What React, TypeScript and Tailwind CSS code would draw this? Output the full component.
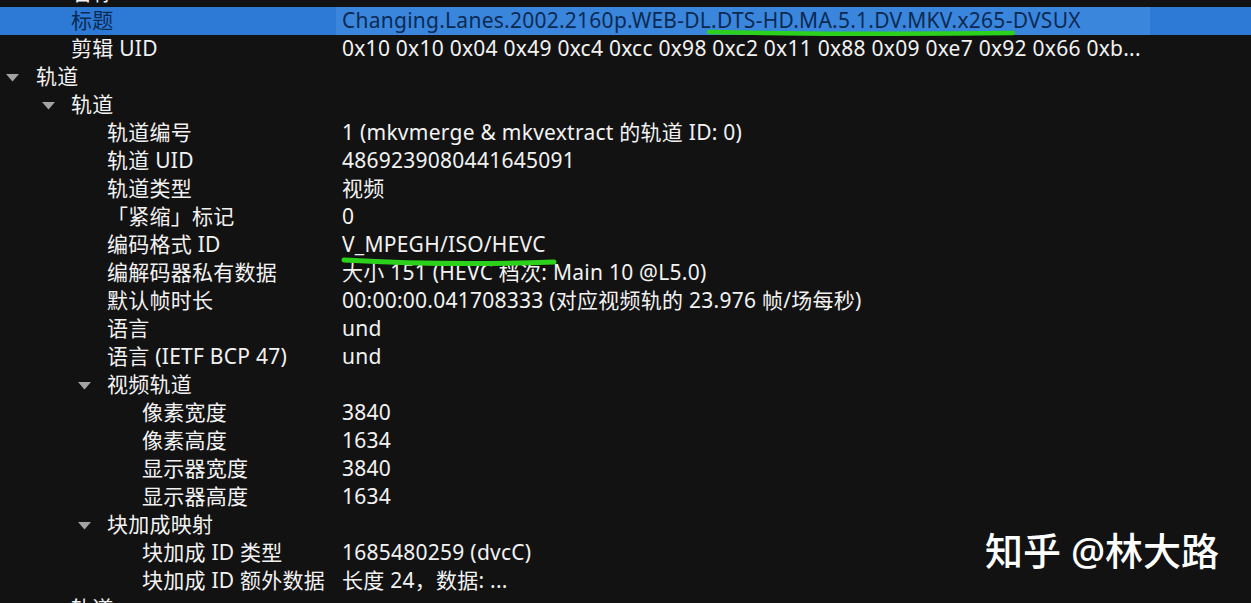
import React from 'react';

type Row = {
  label: string;
  value?: string;
  level: number;
  open?: boolean;
  selected?: boolean;
};

const rows: Row[] = [
  { label: '名称', level: 1 },
  { label: '标题', value: 'Changing.Lanes.2002.2160p.WEB-DL.DTS-HD.MA.5.1.DV.MKV.x265-DVSUX', level: 1, selected: true },
  { label: '剪辑 UID', value: '0x10 0x10 0x04 0x49 0xc4 0xcc 0x98 0xc2 0x11 0x88 0x09 0xe7 0x92 0x66 0xb...', level: 1 },
  { label: '轨道', level: 0, open: true },
  { label: '轨道', level: 1, open: true },
  { label: '轨道编号', value: '1 (mkvmerge & mkvextract 的轨道 ID: 0)', level: 2 },
  { label: '轨道 UID', value: '4869239080441645091', level: 2 },
  { label: '轨道类型', value: '视频', level: 2 },
  { label: '「紧缩」标记', value: '0', level: 2 },
  { label: '编码格式 ID', value: 'V_MPEGH/ISO/HEVC', level: 2 },
  { label: '编解码器私有数据', value: '大小 151 (HEVC 档次: Main 10 @L5.0)', level: 2 },
  { label: '默认帧时长', value: '00:00:00.041708333 (对应视频轨的 23.976 帧/场每秒)', level: 2 },
  { label: '语言', value: 'und', level: 2 },
  { label: '语言 (IETF BCP 47)', value: 'und', level: 2 },
  { label: '视频轨道', level: 2, open: true },
  { label: '像素宽度', value: '3840', level: 3 },
  { label: '像素高度', value: '1634', level: 3 },
  { label: '显示器宽度', value: '3840', level: 3 },
  { label: '显示器高度', value: '1634', level: 3 },
  { label: '块加成映射', level: 2, open: true },
  { label: '块加成 ID 类型', value: '1685480259 (dvcC)', level: 3 },
  { label: '块加成 ID 额外数据', value: '长度 24，数据: ...', level: 3 },
  { label: '轨道', level: 1, open: true },
];

const indent = ['pl-[36px]', 'pl-[71px]', 'pl-[107px]', 'pl-[142px]'];
const arrowPos = ['left-[6px]', 'left-[42px]', 'left-[78px]', 'left-[113px]'];

const Arrow: React.FC<{ className: string }> = ({ className }) => (
  <svg className={`absolute top-[11px] ${className}`} width="13" height="8" viewBox="0 0 13 8">
    <path d="M0 0 L13 0 L6.5 7.5 Z" fill="#a3a3a3" />
  </svg>
);

export default function App() {
  return (
    <div
      className="relative w-[1251px] h-[603px] overflow-hidden bg-[#121212] text-[#f2f2f2] text-[21px] tracking-[0.25px]"
      style={{ fontFamily: '"Noto Sans", "Noto Sans CJK SC", sans-serif' }}
    >
      <div className="-mt-[21px]">
        {rows.map((r, i) => (
          <div
            key={i}
            className={`relative flex h-[28px] items-center leading-none ${r.selected ? 'bg-[#2c7ad6] text-[#0b2a52]' : ''}`}
          >
            {r.open && <Arrow className={arrowPos[r.level]} />}
            <div className={`w-[336px] shrink-0 whitespace-nowrap pb-[2px] ${indent[r.level]}`}>{r.label}</div>
            <div
              className={`flex h-full w-[814px] shrink-0 items-center whitespace-nowrap pb-[2px] pl-[6px] ${r.selected ? 'bg-[#3a86dd]' : ''}`}
            >
              {r.value}
            </div>
          </div>
        ))}
      </div>

      {/* hand-drawn green underlines */}
      <svg className="absolute left-0 top-0 pointer-events-none" width="1251" height="603">
        <path d="M709 32 Q860 35 1013 33" stroke="#2bd11a" strokeWidth="4.5" strokeLinecap="round" fill="none" />
        <path d="M344 260 Q450 266 554 262" stroke="#2bd11a" strokeWidth="5" strokeLinecap="round" fill="none" />
      </svg>

      <div className="absolute left-[985px] top-[531px] text-[38px] font-medium leading-none tracking-normal text-white">
        知乎 @林大路
      </div>
    </div>
  );
}
